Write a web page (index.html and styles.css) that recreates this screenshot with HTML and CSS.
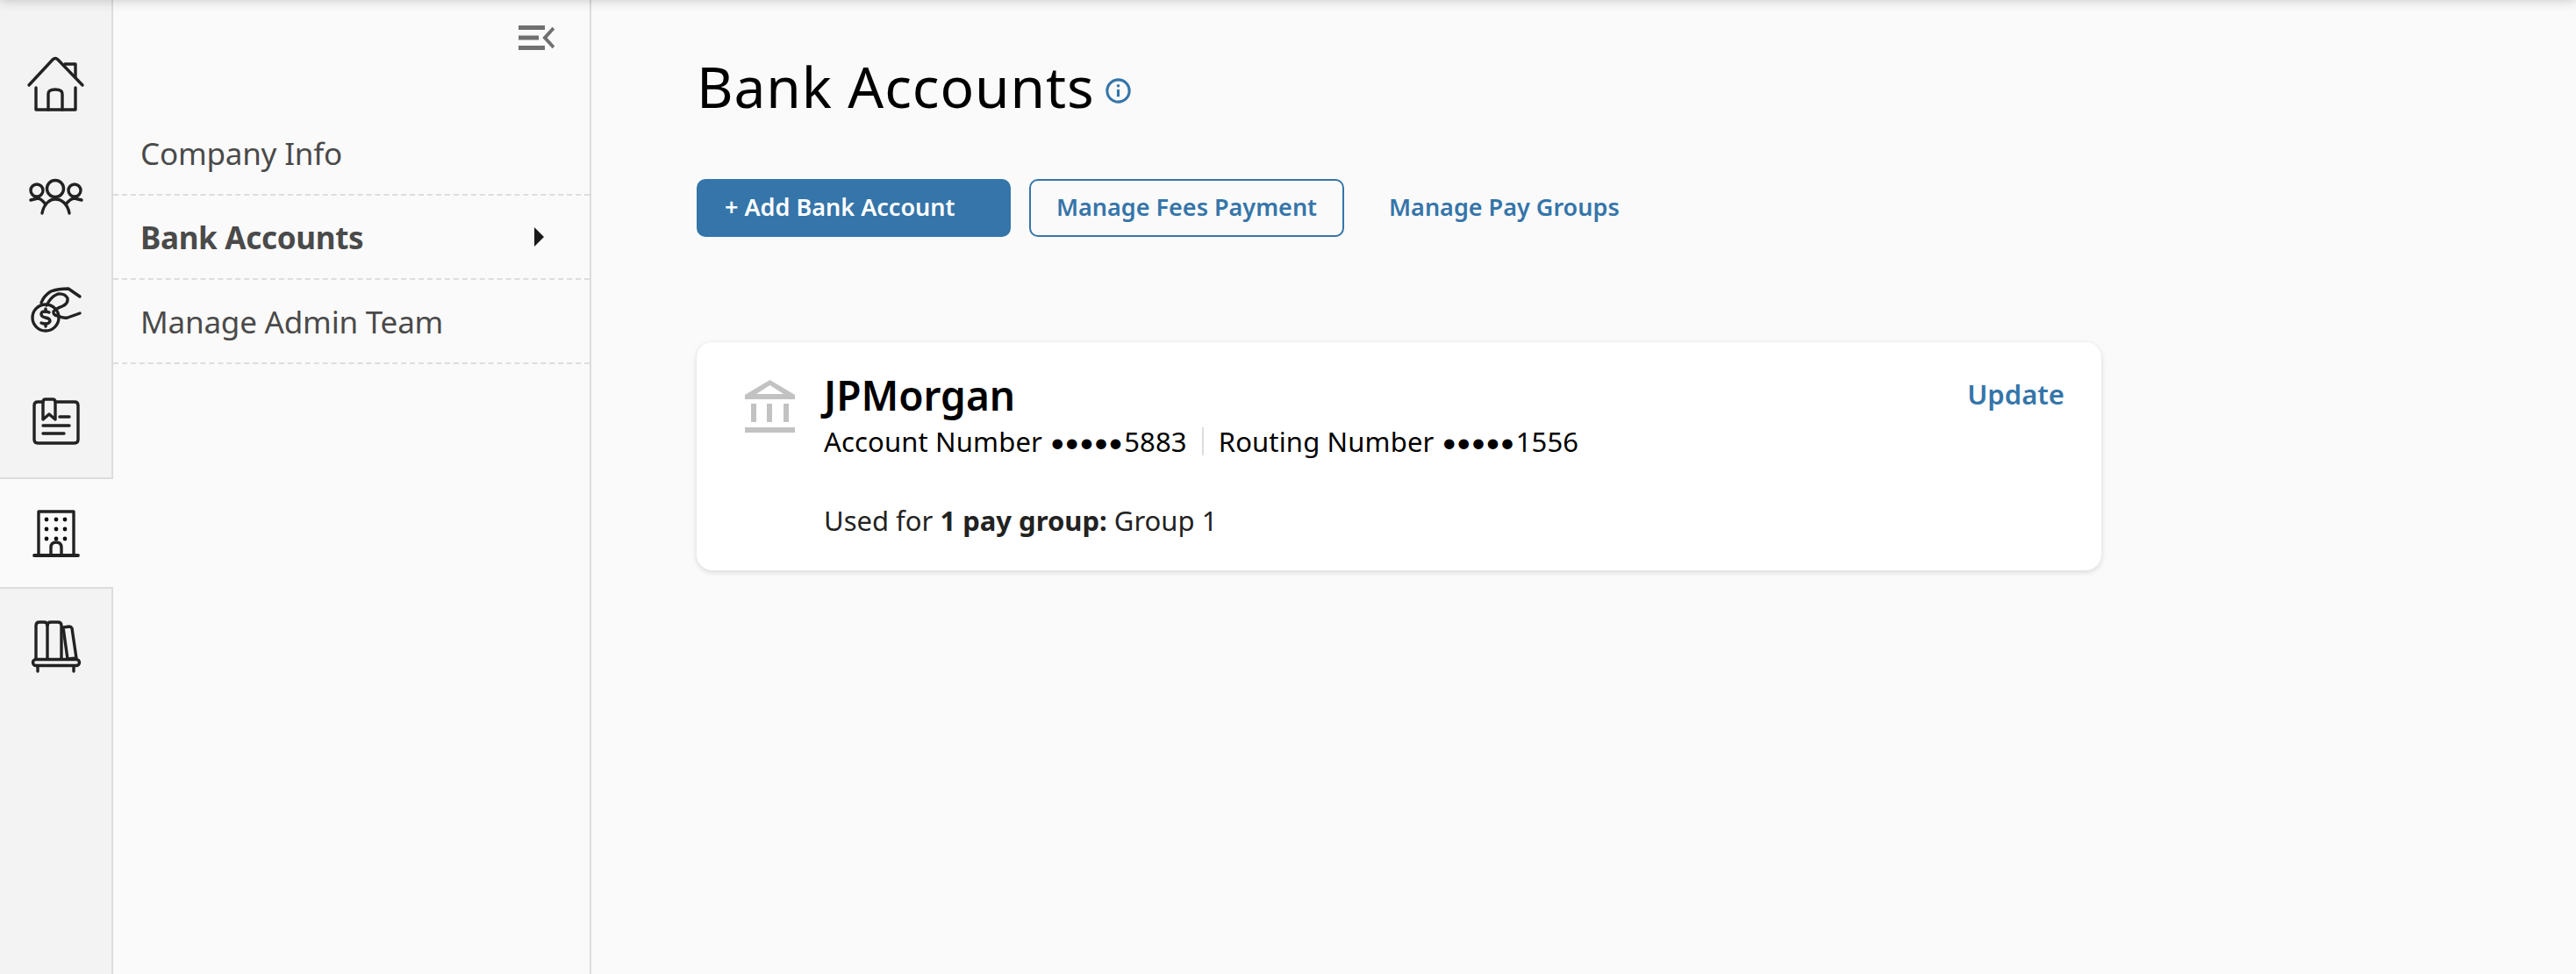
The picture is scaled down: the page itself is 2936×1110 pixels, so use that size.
FILE: index.html
```html
<!DOCTYPE html>
<html lang="en">
<head>
    <meta charset="UTF-8">
    <title>Bank Accounts</title>
    <link rel="stylesheet" href="styles.css">
</head>
<body>
    <div class="top-shadow"></div>

    <nav class="rail">
        <a class="rail-item">
            <svg class="rail-icon" viewBox="0 0 127 127">
                <path d="M33 61 L60 32 Q63 29 66 32 L94 61"/>
                <path d="M74 37 H86 V52"/>
                <path d="M41 64 V89 H86 V64"/>
                <path d="M55 89 V71 Q55 66 63 66 Q71 66 71 71 V89"/>
            </svg>
        </a>
        <a class="rail-item">
            <svg class="rail-icon" viewBox="0 0 127 127">
                <circle cx="63" cy="52" r="9.500"/>
                <circle cx="42" cy="54" r="7"/>
                <circle cx="85" cy="54" r="7"/>
                <path d="M48 80 C50 69 57 64 63 64 C70 64 77 69 79 80"/>
                <path d="M35 65 L43 63 C46 63 49 66 52 70"/>
                <path d="M93 65 L85 63 C82 63 78 66 75 70"/>
            </svg>
        </a>
        <a class="rail-item">
            <svg class="rail-icon" viewBox="0 0 127 127">
                <circle cx="52" cy="72" r="15"/>
                <path d="M56 66 Q54 65 51 65 Q47 65 47 68 Q47 71 52 72 Q57 73 57 76 Q56 79 52 79 Q49 79 47 78"/>
                <path d="M52 62 V65 M52 79 V82"/>
                <path d="M47 55 Q50 47 58 42 Q66 39 78 39 L91 48"/>
                <path d="M53 58 Q58 48 66 45 Q74 44 77 50 Q78 56 71 59 Q63 62 61 65 Q60 69 66 70 Q72 73 77 72 L91 67"/>
            </svg>
        </a>
        <a class="rail-item">
            <svg class="rail-icon" viewBox="0 0 127 127">
                <path d="M49 41 H43 Q39 41 39 45 V84 Q39 88 43 88 H85 Q89 88 89 84 V45 Q89 41 85 41 H63"/>
                <path d="M49 61 V41 Q49 38 52 38 H60 Q63 38 63 41 V61 L56 55 Z"/>
                <path d="M68 58 H79 M49 68 H79 M49 77 H73"/>
            </svg>
        </a>
        <a class="rail-item active">
            <svg class="rail-icon" viewBox="0 0 127 127">
                <path d="M44 89 V39 H84 V89"/>
                <path d="M39 89 H89" class="thick"/>
                <path d="M58 88 V80 Q58 74 64 74 Q70 74 70 80 V88"/>
                <g class="dots">
                    <circle cx="53" cy="48" r="2.400"/><circle cx="64" cy="48" r="2.400"/><circle cx="74" cy="48" r="2.400"/>
                    <circle cx="53" cy="59" r="2.400"/><circle cx="64" cy="59" r="2.400"/><circle cx="74" cy="59" r="2.400"/>
                    <circle cx="53" cy="70" r="2.400"/><circle cx="64" cy="70" r="2.400"/><circle cx="74" cy="70" r="2.400"/>
                </g>
            </svg>
        </a>
        <a class="rail-item">
            <svg class="rail-icon" viewBox="0 0 127 127">
                <path d="M41 80 V42 Q41 38 45 38 H50 Q54 38 54 42 V80"/>
                <path d="M54 42 Q54 38 58 38 H66 Q70 38 70 42 V80"/>
                <path d="M72 44 L79 43 Q81 43 82 45 L87 79 L77 80 Z"/>
                <rect x="37.500" y="80.500" width="53" height="7" rx="3.500"/>
                <path d="M43 88 V94 M84 88 V94"/>
            </svg>
        </a>
    </nav>

    <aside class="sidebar">
        <div class="collapse-row">
            <svg class="collapse-icon" viewBox="0 0 41 28">
                <path d="M0 2.500 H30 M0 14 H23 M0 25.500 H30"/>
                <path d="M40 3 L30 14 L40 25" class="chev"/>
            </svg>
        </div>
        <ul class="side-links">
            <li>Company Info</li>
            <li class="current">Bank Accounts<span class="arrow"></span></li>
            <li>Manage Admin Team</li>
        </ul>
    </aside>

    <main class="content">
        <div class="title-row">
            <h1>Bank Accounts</h1>
            <svg class="info-icon" viewBox="0 0 28 28">
                <circle cx="14" cy="14" r="12.200"/>
                <path d="M14 12.500 V20.500"/>
                <circle class="info-dot" cx="14" cy="8.500" r="1.700"/>
            </svg>
        </div>

        <div class="actions">
            <button class="btn btn-primary">+ Add Bank Account</button>
            <button class="btn btn-outline">Manage Fees Payment</button>
            <button class="btn btn-link">Manage Pay Groups</button>
        </div>

        <section class="card">
            <svg class="bank-icon" viewBox="0 0 57 60">
                <path d="M28.500 0 L57 17 V22 H0 V17 Z M28.500 6 L13 16 H44 Z" fill-rule="evenodd"/>
                <rect x="7" y="27" width="6" height="21"/>
                <rect x="25" y="27" width="6" height="21"/>
                <rect x="44" y="27" width="6" height="21"/>
                <rect x="0" y="54" width="57" height="6"/>
            </svg>
            <div class="card-body">
                <h2>JPMorgan</h2>
                <div class="numbers">
                    <span>Account Number <span class="mask">•••••</span>5883</span>
                    <span class="sep"></span>
                    <span>Routing Number <span class="mask">•••••</span>1556</span>
                </div>
                <p class="usage">Used for <strong>1 pay group:</strong> Group 1</p>
            </div>
            <a class="update">Update</a>
        </section>
    </main>
</body>
</html>
```

FILE: styles.css
```css
* {
    box-sizing: border-box;
}

html, body {
    height: 100%;
}

body {
    margin: 0;
    display: flex;
    font-family: 'Noto Sans', 'Lato', sans-serif;
    background-color: #fafafa;
    color: #000000;
    overflow: hidden;
}

.top-shadow {
    position: absolute;
    top: -20px;
    left: 0;
    width: 100%;
    height: 20px;
    box-shadow: 0 0 14px rgba(0, 0, 0, 0.22);
}

/* Icon rail */
.rail {
    flex: 0 0 129px;
    padding-top: 36px;
    background-color: #f3f3f3;
    border-right: 2px solid #dcdcdc;
}

.rail-item {
    display: block;
    height: 127px;
}

.rail-item.active {
    margin-right: -2px;
    background-color: #fafafa;
    border-top: 2px solid #dcdcdc;
    border-bottom: 2px solid #dcdcdc;
}

.rail-item.active .rail-icon {
    margin-top: -2px;
}

.rail-icon {
    display: block;
    width: 127px;
    height: 127px;
    fill: none;
    stroke: #222222;
    stroke-width: 3.4;
    stroke-linecap: round;
    stroke-linejoin: round;
}

.rail-icon .thick {
    stroke-width: 3.8;
}

.rail-icon .dots {
    fill: #111111;
    stroke: none;
}

/* Second level menu */
.sidebar {
    flex: 0 0 545px;
    border-right: 2px solid #dcdcdc;
}

.collapse-row {
    display: flex;
    justify-content: flex-end;
    padding: 29px 40px 0 0;
    height: 127px;
}

.collapse-icon {
    width: 41px;
    height: 28px;
    fill: none;
    stroke: #707070;
    stroke-width: 5;
}

.collapse-icon .chev {
    stroke-width: 4;
}

.side-links {
    list-style: none;
    margin: 0;
    padding: 0;
}

.side-links li {
    display: flex;
    justify-content: space-between;
    align-items: center;
    height: 96px;
    padding: 0 52px 0 31px;
    border-bottom: 2px dashed #dddddd;
    font-size: 35px;
    letter-spacing: -0.2px;
    color: #4a4a4a;
}

.side-links .current {
    font-weight: 700;
    letter-spacing: -0.3px;
}

.arrow {
    width: 0;
    height: 0;
    border-left: 11px solid #1a1a1a;
    border-top: 11px solid transparent;
    border-bottom: 11px solid transparent;
}

/* Main column */
.content {
    flex: 1;
    padding: 52px 0 0 120px;
}

.title-row {
    display: flex;
    align-items: center;
    gap: 12px;
    height: 92px;
}

h1 {
    margin: 0;
    font-size: 64px;
    font-weight: 400;
    letter-spacing: 0.9px;
}

.info-icon {
    width: 29px;
    height: 29px;
    margin-top: 10px;
    fill: none;
    stroke: #3575a9;
    stroke-width: 3;
}

.info-icon .info-dot {
    fill: #3575a9;
    stroke: none;
}

.actions {
    display: flex;
    gap: 21px;
    margin-top: 60px;
}

.btn {
    height: 66px;
    padding: 0 0 3px;
    border-radius: 10px;
    font-family: inherit;
    font-size: 27px;
    font-weight: 600;
    color: #3575a9;
    background: none;
    border: 2px solid #3575a9;
}

.btn-primary {
    width: 358px;
    padding: 0 30px 3px;
    text-align: left;
    background-color: #3575a9;
    color: #ffffff;
}

.btn-outline {
    width: 359px;
}

.btn-link {
    width: 300px;
    padding-left: 30px;
    text-align: left;
    border: none;
}

.card {
    display: flex;
    width: 1601px;
    height: 260px;
    margin-top: 120px;
    padding: 41px 42px 0 55px;
    background-color: #ffffff;
    border-radius: 18px;
    box-shadow: 0 2px 6px rgba(0, 0, 0, 0.14);
}

.bank-icon {
    flex: none;
    width: 57px;
    height: 60px;
    margin-top: 2px;
    fill: #c2c2c2;
}

.card-body {
    flex: 1;
    margin-left: 33px;
}

h2 {
    margin: -7px 0 7px;
    font-size: 46px;
    font-weight: 600;
    line-height: 52px;
}

.numbers {
    display: flex;
    align-items: center;
    gap: 17px;
    font-size: 31px;
    letter-spacing: 0.15px;
    line-height: 40px;
}

.mask {
    font-family: 'Lato', sans-serif;
    letter-spacing: -1.4px;
    margin-right: 2px;
}

.sep {
    width: 2px;
    height: 32px;
    background-color: #dddddd;
}

.usage {
    margin: 50px 0 0;
    font-size: 31px;
    line-height: 40px;
    color: #222222;
}

.update {
    margin-top: -2px;
    font-size: 31px;
    font-weight: 600;
    color: #3575a9;
    line-height: 40px;
}
```
